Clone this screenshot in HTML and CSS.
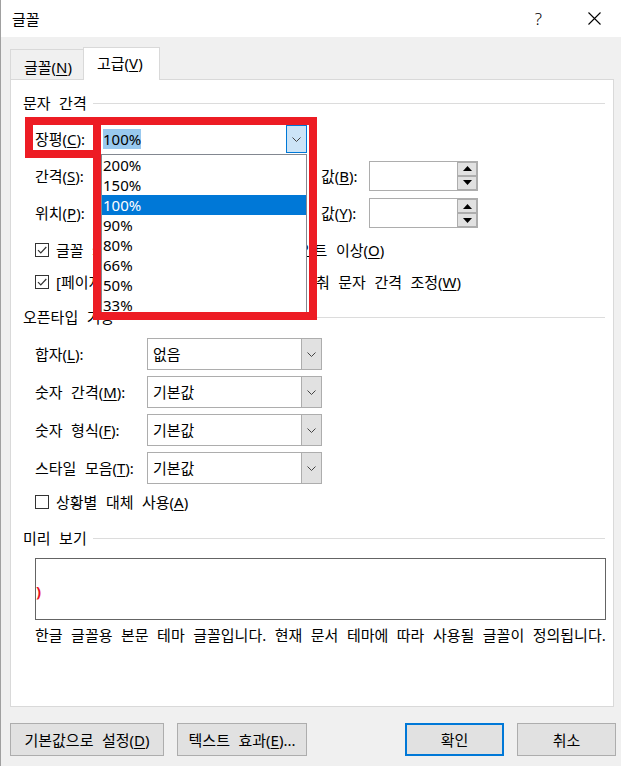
FILE: index.html
```html
<!doctype html>
<html>
  <head>
    <title>글꼴</title>
    <meta charset="utf-8">
    <link rel="stylesheet" href="styles.css">
  </head>

  <body>
    <div class="window">
      <div class="titlebar">
        <span class="title">글꼴</span>
        <span class="help">?</span>
        <svg class="close" width="13" height="13" viewBox="0 0 13 13"><path d="M0.5 0.5L12.5 12.5M12.5 0.5L0.5 12.5" stroke="#000" stroke-width="1.1"/></svg>
      </div>

      <div class="tabs">
        <div class="tab">글꼴(<u>N</u>)</div>
        <div class="tab active">고급(<u>V</u>)</div>
      </div>

      <div class="panel">
        <div class="group-title"><span>문자 간격</span><i></i></div>
        <div class="spacing">
          <span class="lbl">장평(<u>C</u>):</span>
          <div class="edit-combo"><span class="hl">100%</span><span class="drop-btn focused"><svg width="9" height="5" viewBox="0 0 9 5"><path d="M0.5 0.5l4 4 4-4" fill="none" stroke="#444"/></svg></span></div>

          <span class="lbl">간격(<u>S</u>):</span>
          <div class="combo"><span class="value">보통</span><span class="drop-btn"><svg width="9" height="5" viewBox="0 0 9 5"><path d="M0.5 0.5l4 4 4-4" fill="none" stroke="#444"/></svg></span></div>
          <span class="lbl val-lbl">값(<u>B</u>):</span>
          <div class="spin"><div class="spin-btns"><span><svg width="9" height="5" viewBox="0 0 9 5"><path d="M0 5h9L4.5 0z"/></svg></span><span><svg width="9" height="5" viewBox="0 0 9 5"><path d="M0 0h9L4.5 5z"/></svg></span></div></div>

          <span class="lbl">위치(<u>P</u>):</span>
          <div class="combo"><span class="value">보통</span><span class="drop-btn"><svg width="9" height="5" viewBox="0 0 9 5"><path d="M0.5 0.5l4 4 4-4" fill="none" stroke="#444"/></svg></span></div>
          <span class="lbl val-lbl">값(<u>Y</u>):</span>
          <div class="spin"><div class="spin-btns"><span><svg width="9" height="5" viewBox="0 0 9 5"><path d="M0 5h9L4.5 0z"/></svg></span><span><svg width="9" height="5" viewBox="0 0 9 5"><path d="M0 0h9L4.5 5z"/></svg></span></div></div>
        </div>

        <div class="checks">
          <div class="check-row">
            <span class="box"><svg width="12" height="12" viewBox="0 0 12 12"><path d="M2 6.2l2.8 2.8L10.3 3" fill="none" stroke="#333" stroke-width="1.2"/></svg></span>
            <div class="kern-lead"><span>글꼴 커닝(<u>K</u>):</span><div class="spin kern"><div class="spin-btns"><span></span><span></span></div></div></div>
            <span>포인트 이상(<u>O</u>)</span>
          </div>
          <div class="check-row">
            <span class="box"><svg width="12" height="12" viewBox="0 0 12 12"><path d="M2 6.2l2.8 2.8L10.3 3" fill="none" stroke="#333" stroke-width="1.2"/></svg></span>
            <span><span class="clip">[페이지 설정]에 정의된 격자에 맞</span>춰 문자 간격 조정(<u>W</u>)</span>
          </div>
        </div>

        <div class="group-title second"><span>오픈타입 기능</span><i></i></div>
        <div class="ot-rows">
          <div class="ot-row">
            <span class="lbl">합자(<u>L</u>):</span>
            <div class="combo tall"><span class="value">없음</span><span class="drop-btn"><svg width="9" height="5" viewBox="0 0 9 5"><path d="M0.5 0.5l4 4 4-4" fill="none" stroke="#444"/></svg></span></div>
          </div>
          <div class="ot-row">
            <span class="lbl">숫자 간격(<u>M</u>):</span>
            <div class="combo tall"><span class="value">기본값</span><span class="drop-btn"><svg width="9" height="5" viewBox="0 0 9 5"><path d="M0.5 0.5l4 4 4-4" fill="none" stroke="#444"/></svg></span></div>
          </div>
          <div class="ot-row">
            <span class="lbl">숫자 형식(<u>F</u>):</span>
            <div class="combo tall"><span class="value">기본값</span><span class="drop-btn"><svg width="9" height="5" viewBox="0 0 9 5"><path d="M0.5 0.5l4 4 4-4" fill="none" stroke="#444"/></svg></span></div>
          </div>
          <div class="ot-row">
            <span class="lbl">스타일 모음(<u>T</u>):</span>
            <div class="combo tall"><span class="value">기본값</span><span class="drop-btn"><svg width="9" height="5" viewBox="0 0 9 5"><path d="M0.5 0.5l4 4 4-4" fill="none" stroke="#444"/></svg></span></div>
          </div>
          <div class="check-row short">
            <span class="box"></span>
            <span>상황별 대체 사용(<u>A</u>)</span>
          </div>
        </div>

        <div class="group-title third"><span>미리 보기</span><i></i></div>
        <div class="preview"><span class="red">)</span></div>
        <div class="desc">한글 글꼴용 본문 테마 글꼴입니다. 현재 문서 테마에 따라 사용될 글꼴이 정의됩니다.</div>
      </div>

      <div class="footer">
        <div class="btn w154">기본값으로 설정(<u>D</u>)</div>
        <div class="btn w130">텍스트 효과(<u>E</u>)...</div>
        <div class="btn w99 default">확인</div>
        <div class="btn w99">취소</div>
      </div>

      <!-- opened dropdown of 장평 and the red annotation boxes -->
      <div class="dropdown-list">
        <div class="opt">200%</div>
        <div class="opt">150%</div>
        <div class="opt sel">100%</div>
        <div class="opt">90%</div>
        <div class="opt">80%</div>
        <div class="opt">66%</div>
        <div class="opt">50%</div>
        <div class="opt">33%</div>
      </div>
      <div class="mark mark-label"></div>
      <div class="mark mark-list"></div>
    </div>
  </body>
</html>
```

FILE: styles.css
```css
* {
  box-sizing: border-box;
}
body {
  margin: 0;
  width: 621px;
  height: 766px;
  overflow: hidden;
  background: #f0f0f0;
  font-family: "Noto Sans", "Noto Sans CJK KR", sans-serif;
  font-size: 15px;
  line-height: 20px;
  word-spacing: 4.6px;
  color: #000;
}
u {
  text-underline-offset: 2px;
}
.window {
  position: relative;
  width: 621px;
  height: 766px;
  border-left: 1px solid #a0a0a0;
}
.titlebar {
  height: 37px;
  background: #fff;
  display: flex;
  align-items: center;
  padding: 0 20px 0 11px;
}
.title {
  flex: 1;
}
.help {
  font-size: 17px;
  font-weight: 300;
  margin-right: 46px;
}
.tabs {
  height: 42px;
  display: flex;
  align-items: flex-end;
  padding-left: 9px;
}
.tab {
  width: 73px;
  height: 30px;
  border-top: 1px solid #d9d9d9;
  border-left: 1px solid #d9d9d9;
  padding: 7px 0 0 13px;
}
.tab.active {
  width: 77px;
  height: 33px;
  margin-bottom: -1px;
  background: #fff;
  border: 1px solid #d9d9d9;
  border-bottom: none;
  padding: 5px 0 0 13px;
  position: relative;
  z-index: 1;
}
.panel {
  margin-left: 9px;
  width: 604px;
  height: 628px;
  background: #fff;
  border: 1px solid #d9d9d9;
  padding: 0 8px 0 24px;
}
.group-title {
  display: flex;
  align-items: center;
  gap: 6px;
  height: 20px;
  margin: 13px 0 0 -12px;
}
.group-title i {
  flex: 1;
  height: 1px;
  background: #dcdcdc;
}
.group-title.second {
  margin-top: 9px;
}
.group-title.third {
  margin-top: 11px;
}
.spacing {
  display: grid;
  grid-template-columns: 66px 206px 62px 109px;
  grid-template-rows: 36px 37px 38px;
  align-items: center;
  margin-top: 8px;
}
.val-lbl {
  padding-left: 14px;
}
.edit-combo {
  grid-column: 2 / 5;
  width: 206px;
  height: 28px;
  display: flex;
  align-items: center;
  padding-left: 2px;
  background: #fff;
}
.hl {
  background: #99c9ef;
  line-height: 20px;
}
.drop-btn {
  margin-left: auto;
  width: 20px;
  height: 100%;
  display: flex;
  align-items: center;
  justify-content: center;
  background: #e1e1e1;
  border-left: 1px solid #adadad;
}
.drop-btn.focused {
  width: 21px;
  background: #cce4f7;
  border: 1px solid #0078d7;
}
.combo {
  height: 28px;
  display: flex;
  align-items: center;
  border: 1px solid #adadad;
  background: #fff;
}
.combo.tall {
  height: 32px;
}
.combo .value {
  padding-left: 5px;
}
.spin {
  height: 30px;
  display: flex;
  justify-content: flex-end;
  border: 1px solid #adadad;
  background: #fff;
}
.spin.kern {
  width: 100px;
}
.spin-btns {
  width: 20px;
  display: flex;
  flex-direction: column;
}
.spin-btns span {
  flex: 1;
  display: flex;
  align-items: center;
  justify-content: center;
  background: #e1e1e1;
  border: 1px solid #adadad;
}
.checks {
  margin-top: 2px;
}
.check-row {
  height: 32px;
  display: flex;
  align-items: center;
  gap: 7px;
  white-space: nowrap;
}
.check-row.short {
  height: 30px;
}
.box {
  width: 14px;
  height: 14px;
  border: 1px solid #333;
  display: flex;
  align-items: center;
  justify-content: center;
  background: #fff;
}
.kern-lead {
  width: 223px;
  display: flex;
  align-items: center;
  gap: 7px;
}
.clip {
  display: inline-block;
  width: 260px;
  overflow: hidden;
  vertical-align: top;
}
.ot-rows {
  margin-top: 8px;
}
.ot-row {
  display: grid;
  grid-template-columns: 112px 175px;
  height: 38px;
  align-items: center;
}
.preview {
  margin-top: 10px;
  width: 571px;
  height: 62px;
  border: 1px solid #646464;
  display: flex;
  align-items: center;
}
.red {
  color: #e81123;
  font-weight: bold;
  margin-top: 4px;
}
.desc {
  margin-top: 5px;
  white-space: nowrap;
}
.footer {
  display: flex;
  gap: 13px;
  margin-top: 16px;
  padding: 0 5px 0 9px;
}
.btn {
  height: 33px;
  display: flex;
  align-items: center;
  justify-content: center;
  background: #e1e1e1;
  border: 1px solid #adadad;
  white-space: nowrap;
}
.btn.default {
  margin-left: auto;
  border: 2px solid #0078d7;
}
.w154 { width: 154px; }
.w130 { width: 130px; }
.w99 { width: 99px; }
.dropdown-list {
  position: absolute;
  left: 100px;
  top: 154px;
  width: 206px;
  border: 1px solid #828790;
  background: #fff;
}
.opt {
  height: 20px;
  line-height: 20px;
  padding-left: 1px;
}
.opt.sel {
  background: #0078d7;
  color: #fff;
}
.mark {
  position: absolute;
  border: 8px solid #ed1c24;
}
.mark-label {
  left: 24px;
  top: 117px;
  width: 76px;
  height: 41px;
}
.mark-list {
  left: 92px;
  top: 117px;
  width: 224px;
  height: 203px;
}
```
